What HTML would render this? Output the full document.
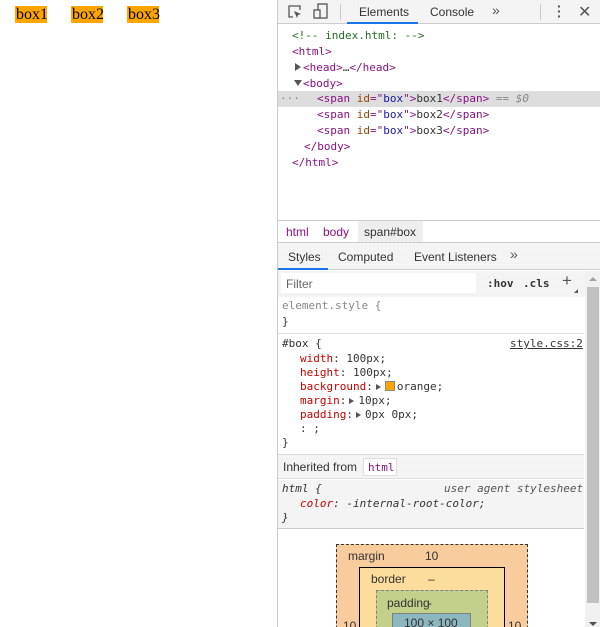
<!DOCTYPE html>
<html><head><meta charset="utf-8"><style>
*{margin:0;padding:0;box-sizing:border-box}
html,body{width:600px;height:627px;overflow:hidden}
body{background:#fff;position:relative;font-family:"Liberation Sans",sans-serif;font-size:12px;color:#333}
.a{position:absolute}
.bx{position:absolute;top:6px;height:17px;background:orange;font-family:"Liberation Serif",serif;font-size:16px;line-height:17px;color:#000;padding:0 1px}
.mono{font-family:"DejaVu Sans Mono","Liberation Mono",monospace;font-size:11px}
.line{position:absolute;height:16px;line-height:16px;white-space:pre}
.tg{color:#881280}.at{color:#994500}.av{color:#1a1aa6}.cm{color:#236e25}.gr{color:#888}
.pn{color:#c80000}
.dot{background-color:#f3f3f3;background-image:radial-gradient(#fff 0.6px,transparent 0.7px);background-size:4px 4px}
.tri{display:inline-block;width:0;height:0;border-left:5px solid #555;border-top:3.5px solid transparent;border-bottom:3.5px solid transparent;margin:0 4px 0 3px;vertical-align:0}
.tr{position:absolute;width:0;height:0}
</style></head><body>
<span class="bx" style="left:15px;width:32px">box1</span>
<span class="bx" style="left:71px;width:32px">box2</span>
<span class="bx" style="left:127px;width:32px">box3</span>

<div class="a" style="left:277px;top:0;width:323px;height:627px;border-left:1px solid #ccc;background:#fff;overflow:hidden">
 <div class="a dot" style="left:0;top:0;width:322px;height:24px;border-bottom:1px solid #ccc"></div>
 <svg class="a" style="left:9px;top:4px" width="16" height="16" viewBox="0 0 16 16"><path d="M6 13H2V2h11v4" fill="none" stroke="#555" stroke-width="1.3"/><path d="M7 7l7 3-3 1-1 3z" fill="#555"/></svg>
 <svg class="a" style="left:35px;top:3px" width="16" height="17" viewBox="0 0 16 17"><rect x="5" y="1" width="9" height="14" fill="none" stroke="#555" stroke-width="1.3"/><rect x="1" y="7" width="6" height="8" fill="#f3f3f3" stroke="#555" stroke-width="1.3"/></svg>
 <div class="a" style="left:62px;top:4px;width:1px;height:16px;background:#ccc"></div>
 <div class="a" style="left:81px;top:5px;color:#333">Elements</div>
 <div class="a" style="left:69px;top:22px;width:71px;height:2px;background:#1a73e8"></div>
 <div class="a" style="left:152px;top:5px;color:#333">Console</div>
 <div class="a" style="left:214px;top:2px;font-size:14px;color:#555">»</div>
 <div class="a" style="left:262px;top:4px;width:1px;height:16px;background:#ccc"></div>
 <div class="a" style="left:279px;top:4px;font-size:14px;font-weight:bold;color:#555;line-height:5px;width:4px">·<br>·<br>·</div>
 <div class="a" style="left:300px;top:2px;font-size:16px;color:#555">✕</div>

 <div class="a" style="left:0;top:91px;width:322px;height:16px;background:#ddd"></div>
 <div class="mono">
  <div class="line" style="top:28px;left:14px"><span class="cm">&lt;!-- index.html: --&gt;</span></div>
  <div class="line" style="top:44px;left:14px"><span class="tg">&lt;html&gt;</span></div>
  <div class="tr" style="left:17px;top:63px;border-left:6px solid #555;border-top:4px solid transparent;border-bottom:4px solid transparent"></div>
  <div class="line" style="top:60px;left:25px"><span class="tg">&lt;head&gt;</span>…<span class="tg">&lt;/head&gt;</span></div>
  <div class="tr" style="left:16px;top:80px;border-top:6px solid #555;border-left:4px solid transparent;border-right:4px solid transparent"></div>
  <div class="line" style="top:76px;left:25px"><span class="tg">&lt;body&gt;</span></div>
  <div class="line" style="top:91px;left:2px"><span class="gr">···</span></div>
  <div class="line" style="top:91px;left:39px"><span class="tg">&lt;span </span><span class="at">id</span><span class="tg">="</span><span class="av">box</span><span class="tg">"&gt;</span>box1<span class="tg">&lt;/span&gt;</span> <span class="gr">== <i>$0</i></span></div>
  <div class="line" style="top:107px;left:39px"><span class="tg">&lt;span </span><span class="at">id</span><span class="tg">="</span><span class="av">box</span><span class="tg">"&gt;</span>box2<span class="tg">&lt;/span&gt;</span></div>
  <div class="line" style="top:123px;left:39px"><span class="tg">&lt;span </span><span class="at">id</span><span class="tg">="</span><span class="av">box</span><span class="tg">"&gt;</span>box3<span class="tg">&lt;/span&gt;</span></div>
  <div class="line" style="top:139px;left:26px"><span class="tg">&lt;/body&gt;</span></div>
  <div class="line" style="top:155px;left:14px"><span class="tg">&lt;/html&gt;</span></div>
 </div>

 <div class="a" style="left:0;top:220px;width:322px;height:23px;border-top:1px solid #ccc;border-bottom:1px solid #ccc"></div>
 <div class="a" style="left:8px;top:225px;color:#881280">html</div>
 <div class="a" style="left:45px;top:225px;color:#881280">body</div>
 <div class="a" style="left:80px;top:221px;width:65px;height:21px;background:#eee"></div>
 <div class="a" style="left:86px;top:225px;color:#333">span#box</div>

 <div class="a dot" style="left:0;top:243px;width:322px;height:27px;border-bottom:1px solid #ccc"></div>
 <div class="a" style="left:10px;top:250px">Styles</div>
 <div class="a" style="left:0;top:268px;width:50px;height:2px;background:#1a73e8"></div>
 <div class="a" style="left:60px;top:250px">Computed</div>
 <div class="a" style="left:136px;top:250px">Event Listeners</div>
 <div class="a" style="left:232px;top:246px;font-size:14px;color:#555">»</div>

 <div class="a dot" style="left:0;top:271px;width:307px;height:26px"></div>
 <div class="a" style="left:3px;top:273px;width:195px;height:20px;background:#fff"></div>
 <div class="a" style="left:8px;top:277px;color:#666">Filter</div>
 <div class="a mono" style="left:209px;top:277px;font-weight:bold;color:#333">:hov</div>
 <div class="a mono" style="left:245px;top:277px;font-weight:bold;color:#333">.cls</div>
 <div class="a" style="left:284px;top:271px;font-size:17px;color:#555">+</div>
 <div class="a" style="left:296px;top:289px;border-left:4px solid transparent;border-bottom:4px solid #555"></div>

 <div class="a" style="left:307px;top:271px;width:15px;height:356px;background:#f1f1f1"></div>
 <div class="a" style="left:309px;top:287px;width:12px;height:316px;background:#c1c1c1"></div>
 <div class="a" style="left:311px;top:277px;border-left:4px solid transparent;border-right:4px solid transparent;border-bottom:4px solid #a3a3a3"></div>
 <div class="a" style="left:311px;top:622px;border-left:4px solid transparent;border-right:4px solid transparent;border-top:4px solid #505050"></div>

 <div class="mono">
  <div class="line" style="top:298px;left:4px;color:#888">element.style {</div>
  <div class="line" style="top:314px;left:4px">}</div>
  <div class="a" style="left:0;top:333px;width:306px;height:1px;background:#ddd"></div>
  <div class="line" style="top:336px;left:4px">#box {</div>
  <div class="a" style="left:232px;top:336px;line-height:16px;text-decoration:underline;color:#333">style.css:2</div>
  <div class="line" style="top:351px;left:22px"><span class="pn">width</span>: 100px;</div>
  <div class="line" style="top:365px;left:22px"><span class="pn">height</span>: 100px;</div>
  <div class="line" style="top:379px;left:22px"><span class="pn">background</span>:<span class="tri"></span><span style="display:inline-block;width:10px;height:10px;background:orange;border:1px solid #888;vertical-align:-1px;margin-right:2px"></span>orange;</div>
  <div class="line" style="top:393px;left:22px"><span class="pn">margin</span>:<span class="tri"></span>10px;</div>
  <div class="line" style="top:407px;left:22px"><span class="pn">padding</span>:<span class="tri"></span>0px 0px;</div>
  <div class="line" style="top:421px;left:22px">: ;</div>
  <div class="line" style="top:435px;left:4px">}</div>
 </div>
 <div class="a" style="left:0;top:454px;width:306px;height:1px;background:#ddd"></div>
 <div class="a dot" style="left:0;top:455px;width:306px;height:24px;border-bottom:1px solid #ddd"></div>
 <div class="a" style="left:5px;top:460px;color:#333">Inherited from</div>
 <div class="a mono" style="left:85px;top:458px;width:34px;height:18px;border:1px solid #ddd;background:#fff;color:#881280;padding:2px 0 0 4px">html</div>
 <div class="a dot" style="left:0;top:480px;width:306px;height:49px;border-bottom:1px solid #ccc"></div>
 <div class="mono">
  <div class="line" style="top:481px;left:4px;font-style:italic">html {</div>
  <div class="a" style="left:166px;top:481px;line-height:16px;font-style:italic;color:#555">user agent stylesheet</div>
  <div class="line" style="top:496px;left:22px;font-style:italic"><span class="pn">color</span>: -internal-root-color;</div>
  <div class="line" style="top:510px;left:4px;font-style:italic">}</div>
 </div>

 <div class="a" style="left:58px;top:544px;width:192px;height:100px;background:#f9cc9d;border:1px dashed #333"></div>
 <div class="a" style="left:70px;top:549px;color:#333">margin</div>
 <div class="a" style="left:147px;top:549px;color:#333">10</div>
 <div class="a" style="left:81px;top:567px;width:146px;height:80px;background:#fddd9b;border:1px solid #000"></div>
 <div class="a" style="left:93px;top:572px;color:#333">border</div>
 <div class="a" style="left:150px;top:572px;color:#333">–</div>
 <div class="a" style="left:98px;top:590px;width:112px;height:60px;background:#c3d08b;border:1px dashed #808080"></div>
 <div class="a" style="left:109px;top:596px;color:#333">padding</div>
 <div class="a" style="left:150px;top:596px;color:#333">-</div>
 <div class="a" style="left:114px;top:613px;width:79px;height:30px;background:#8cb6c0;border:1px solid #808080"></div>
 <div class="a" style="left:126px;top:616px;color:#333">100 × 100</div>
 <div class="a" style="left:65px;top:619px;color:#333">10</div>
 <div class="a" style="left:230px;top:619px;color:#333">10</div>
</div>
</body></html>
